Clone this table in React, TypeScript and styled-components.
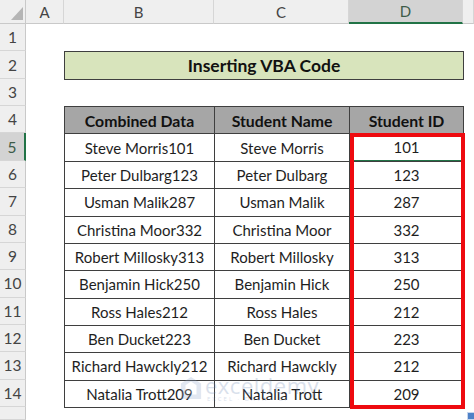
import React from "react";
import styled, { createGlobalStyle, css } from "styled-components";

const Global = createGlobalStyle`
  html, body { margin: 0; padding: 0; background: #ffffff; }
  body { font-family: Lato, "Open Sans", sans-serif; }
`;

const Sheet = styled.div`
  position: relative;
  width: 474px;
  height: 420px;
  overflow: hidden;
  display: grid;
  grid-template-columns: 26px 38px 150px 135px 114px 1fr;
  grid-template-rows: 24px repeat(14, 27.36px) 1fr;
  background: #ffffff;
`;

const Corner = styled.div`
  grid-column: 1;
  grid-row: 1;
  background: #efefef;
  border-right: 1px solid #c9c9c9;
  border-bottom: 1px solid #c9c9c9;
  box-sizing: border-box;
  position: relative;
  svg { position: absolute; left: 11px; top: 7px; }
`;

const ColHead = styled.div<{ $col: number; $active?: boolean }>`
  grid-column: ${(p) => p.$col};
  grid-row: 1;
  box-sizing: border-box;
  display: flex;
  align-items: center;
  justify-content: center;
  font-size: 15px;
  color: #444;
  background: #efefef;
  border-right: 1px solid #d6d6d6;
  border-bottom: 1px solid #c9c9c9;
  ${(p) =>
    p.$active &&
    css`
      background: #d3d3d3;
      color: #3d5c48;
      border-bottom: 2px solid #217346;
    `}
`;

const RowHead = styled.div<{ $row: number; $active?: boolean }>`
  grid-column: 1;
  grid-row: ${(p) => p.$row};
  box-sizing: border-box;
  display: flex;
  align-items: center;
  justify-content: center;
  font-size: 15.5px;
  color: #444;
  background: #efefef;
  border-bottom: 1px solid #d6d6d6;
  border-right: 1px solid #c9c9c9;
  ${(p) =>
    p.$active &&
    css`
      background: #d3d3d3;
      color: #3d5c48;
      border-right: 2px solid #217346;
    `}
`;

const Cell = styled.div<{ $col: number; $row: number; $span?: number; $fill?: string; $bold?: boolean; $greenBottom?: boolean }>`
  grid-column: ${(p) => (p.$span ? `${p.$col} / span ${p.$span}` : p.$col)};
  grid-row: ${(p) => p.$row};
  box-sizing: border-box;
  margin: 0 -1px -1px 0;
  border: 1px solid #3f3f3f;
  background: ${(p) => p.$fill || "#ffffff"};
  display: flex;
  align-items: center;
  justify-content: center;
  font-size: ${(p) => (p.$bold ? "15.8px" : "15px")};
  font-weight: ${(p) => (p.$bold ? 700 : 400)};
  color: ${(p) => (p.$bold ? "#111" : "#1e1e1e")};
  white-space: nowrap;
  ${(p) =>
    p.$greenBottom &&
    css`
      border-bottom: 2px solid #217346;
    `}
`;

const Title = styled(Cell)`
  font-size: 17.5px;
`;

const RedBox = styled.div`
  grid-column: 5;
  grid-row: 6 / span 10;
  margin: 0 -2px -2px 1px;
  border: 4px solid #ee0a0f;
  box-sizing: border-box;
  z-index: 2;
  pointer-events: none;
`;

const Watermark = styled.div`
  position: absolute;
  left: 180px;
  top: 374px;
  display: flex;
  align-items: center;
  gap: 3px;
  opacity: 0.25;
  z-index: 1;
  pointer-events: none;
`;

const WmText = styled.div`
  display: flex;
  flex-direction: column;
  line-height: 1;
`;

const WmBrand = styled.span`
  font-family: "Open Sans", sans-serif;
  font-size: 22px;
  color: #6d88b4;
  letter-spacing: 0.5px;
`;

const WmTag = styled.span`
  font-family: "Open Sans", sans-serif;
  font-size: 6px;
  letter-spacing: 2px;
  color: #6d88b4;
  margin-left: 2px;
`;

const Handle = styled.div`
  position: absolute;
  left: 467px;
  top: 412px;
  width: 7px;
  height: 6px;
  background: #4f81c7;
  border: 1px solid #c7d6ee;
`;

const rows: [string, string, string][] = [
  ["Steve Morris101", "Steve Morris", "101"],
  ["Peter Dulbarg123", "Peter Dulbarg", "123"],
  ["Usman Malik287", "Usman Malik", "287"],
  ["Christina Moor332", "Christina Moor", "332"],
  ["Robert Millosky313", "Robert Millosky", "313"],
  ["Benjamin Hick250", "Benjamin Hick", "250"],
  ["Ross Hales212", "Ross Hales", "212"],
  ["Ben Ducket223", "Ben Ducket", "223"],
  ["Richard Hawckly212", "Richard Hawckly", "212"],
  ["Natalia Trott209", "Natalia Trott", "209"],
];

export default function App() {
  const rowNums = Array.from({ length: 15 }, (_, i) => i + 1);
  return (
    <>
      <Global />
      <Sheet>
        <Corner>
          <svg width="13" height="14" viewBox="0 0 13 14">
            <polygon points="12,0 12,13 0,13" fill="#b5b5b5" />
          </svg>
        </Corner>
        {["A", "B", "C", "D", ""].map((l, i) => (
          <ColHead key={i} $col={i + 2} $active={l === "D"}>
            {l}
          </ColHead>
        ))}
        {rowNums.map((n) => (
          <RowHead key={n} $row={n + 1} $active={n === 5}>
            {n <= 14 ? n : ""}
          </RowHead>
        ))}
        <Title $col={3} $row={3} $span={3} $fill="#d8e4bc" $bold>
          Inserting VBA Code
        </Title>
        {["Combined Data", "Student Name", "Student ID"].map((h, i) => (
          <Cell key={h} $col={i + 3} $row={5} $fill="#a6a6a6" $bold>
            {h}
          </Cell>
        ))}
        {rows.map((r, ri) =>
          r.map((v, ci) => (
            <Cell key={`${ri}-${ci}`} $col={ci + 3} $row={ri + 6} $greenBottom={ri === 0 && ci === 2}>
              {v}
            </Cell>
          ))
        )}
        <RedBox />
        <Watermark>
          <svg width="22" height="24" viewBox="0 0 24 26">
            <polygon points="12,1 23,8 23,25 1,25 1,8" fill="#8aa2c8" />
            <polygon points="12,6 18,10 18,20 6,20 6,10" fill="#ffffff" />
          </svg>
          <WmText>
            <WmBrand>exceldemy</WmBrand>
            <WmTag>EXCEL · DATA · BI</WmTag>
          </WmText>
        </Watermark>
        <Handle />
      </Sheet>
    </>
  );
}
